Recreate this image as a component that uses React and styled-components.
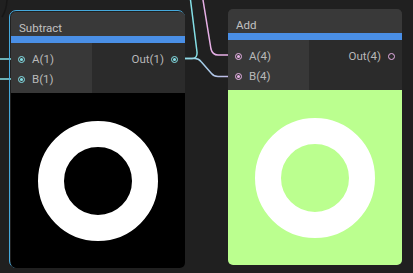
import styled, { createGlobalStyle } from "styled-components";

const Global = createGlobalStyle`
  html, body {
    margin: 0;
    padding: 0;
    background: #202020;
  }
  body {
    font-family: "Roboto", "Inter", sans-serif;
  }
`;

const Canvas = styled.div`
  position: relative;
  width: 413px;
  height: 273px;
  overflow: hidden;
  background: #202020;
`;

const Wires = styled.svg`
  position: absolute;
  left: 0;
  top: 0;
  width: 413px;
  height: 273px;
  pointer-events: none;
`;

const Selection = styled.div`
  position: absolute;
  left: ${(p) => p.x - 2}px;
  top: ${(p) => p.y - 2}px;
  width: 176px;
  height: 258px;
  border: 1px solid #45a9dc;
  border-radius: 7px;
  box-sizing: border-box;
`;

const Node = styled.div`
  position: absolute;
  left: ${(p) => p.x}px;
  top: ${(p) => p.y}px;
  width: 174px;
  height: 256px;
  border-radius: 5px;
  overflow: hidden;
  display: flex;
  flex-direction: column;
  background: #2b2b2b;
`;

const Title = styled.div`
  height: 24px;
  box-sizing: border-box;
  flex: none;
  background: #393939;
  color: #c2c2c2;
  font-size: 11.5px;
  line-height: 13px;
  padding: 10px 0 0 8px;
`;

const Bar = styled.div`
  height: 7px;
  flex: none;
  background: #4a8fe6;
`;

const Ports = styled.div`
  height: 50px;
  flex: none;
  display: grid;
  grid-template-columns: 81px 1fr;
`;

const Column = styled.div`
  display: flex;
  flex-direction: column;
  align-items: ${(p) => (p.out ? "flex-end" : "flex-start")};
  padding: 6px 0;
  background: ${(p) => (p.out ? "#2b2b2b" : "#383838")};
`;

const Port = styled.div`
  height: 20px;
  display: flex;
  align-items: center;
  gap: 7px;
  padding: ${(p) => (p.out ? "0 7px 0 0" : "0 0 0 7px")};
  color: #b8b8b8;
  font-size: 11.5px;
`;

const Dot = styled.span`
  width: 7px;
  height: 7px;
  box-sizing: border-box;
  border-radius: 50%;
  border: 1.3px solid ${(p) => p.color};
  display: flex;
  align-items: center;
  justify-content: center;
  &::after {
    content: "";
    width: 3px;
    height: 3px;
    border-radius: 50%;
    background: ${(p) => (p.hollow ? "transparent" : p.color)};
  }
`;

const Preview = styled.div`
  flex: 1;
  background: ${(p) => p.bg};
  display: flex;
  align-items: center;
  justify-content: center;
`;

const Ring = styled.div`
  width: 120px;
  height: 120px;
  box-sizing: border-box;
  border-radius: 50%;
  border: 26px solid #ffffff;
`;

const CYAN = "#84dfe6";
const PINK = "#e7b0e6";

function ShaderNode({ x, y, title, inputs, output, color, outHollow, preview }) {
  return (
    <Node x={x} y={y}>
      <Title>{title}</Title>
      <Bar />
      <Ports>
        <Column>
          {inputs.map((name) => (
            <Port key={name}>
              <Dot color={color} />
              {name}
            </Port>
          ))}
        </Column>
        <Column out>
          <Port out>
            {output}
            <Dot color={color} hollow={outHollow} />
          </Port>
        </Column>
      </Ports>
      <Preview bg={preview}>
        <Ring />
      </Preview>
    </Node>
  );
}

export default function App() {
  return (
    <Canvas>
      <Global />
      <Wires viewBox="0 0 413 273">
        <defs>
          <linearGradient id="mix" x1="0" x2="1" y1="0" y2="0">
            <stop offset="0" stopColor={CYAN} />
            <stop offset="1" stopColor="#c9b9e9" />
          </linearGradient>
        </defs>
        <path d="M7 0 Q6.5 10 2 17" stroke="#171717" strokeWidth="1.5" fill="none" />
        <path d="M0 59 H18" stroke={CYAN} strokeWidth="1.5" fill="none" />
        <path d="M0 79 H18" stroke={CYAN} strokeWidth="1.5" fill="none" />
        <path d="M177 58.5 H192 Q197.5 58.5 197 52 L190.5 0" stroke={CYAN} strokeWidth="1.5" fill="none" />
        <path d="M177 58.5 H195 Q198.5 58.5 201 61.5 L211.5 73.5 Q214 76.5 218 76.5 H233" stroke="url(#mix)" strokeWidth="1.5" fill="none" />
        <path d="M203 0 L211 49 Q212.5 55 218 55 H233" stroke={PINK} strokeWidth="1.5" fill="none" />
      </Wires>
      <Selection x={11} y={12} />
      <ShaderNode
        x={11}
        y={12}
        title="Subtract"
        inputs={["A(1)", "B(1)"]}
        output="Out(1)"
        color={CYAN}
        preview="#000000"
      />
      <ShaderNode
        x={228}
        y={9}
        title="Add"
        inputs={["A(4)", "B(4)"]}
        output="Out(4)"
        color={PINK}
        outHollow
        preview="#bbff8f"
      />
    </Canvas>
  );
}
